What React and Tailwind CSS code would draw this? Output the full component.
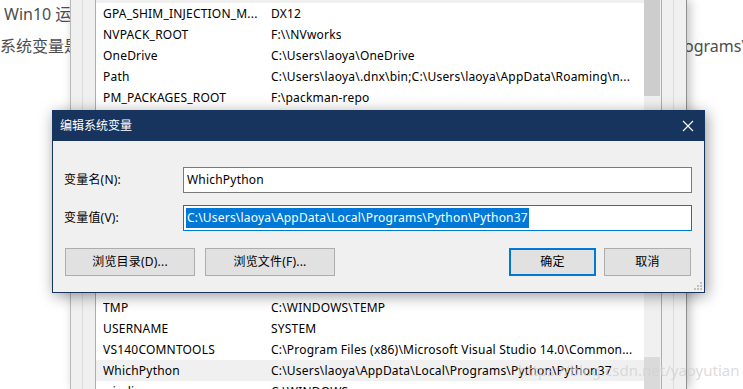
import React from "react";

// hidden rows sit under the dialog, so they are left blank
const rows = [
  { name: "", value: "", hl: true },
  { name: "GPA_SHIM_INJECTION_M...", value: "DX12" },
  { name: "NVPACK_ROOT", value: "F:\\\\NVworks" },
  { name: "OneDrive", value: "C:\\Users\\laoya\\OneDrive" },
  { name: "Path", value: "C:\\Users\\laoya\\.dnx\\bin;C:\\Users\\laoya\\AppData\\Roaming\\n..." },
  { name: "PM_PACKAGES_ROOT", value: "F:\\packman-repo" },
  { name: "", value: "" },
  { name: "", value: "" },
  { name: "", value: "" },
  { name: "", value: "" },
  { name: "", value: "" },
  { name: "", value: "" },
  { name: "", value: "" },
  { name: "", value: "" },
  { name: "", value: "" },
  { name: "TMP", value: "C:\\WINDOWS\\TEMP" },
  { name: "USERNAME", value: "SYSTEM" },
  { name: "VS140COMNTOOLS", value: "C:\\Program Files (x86)\\Microsoft Visual Studio 14.0\\Common..." },
  { name: "WhichPython", value: "C:\\Users\\laoya\\AppData\\Local\\Programs\\Python\\Python37", hl: true },
  { name: "windir", value: "C:\\WINDOWS" },
];

function EnvRow({ name, value, hl }) {
  return (
    <div className={`flex h-[21px] shrink-0 items-center pl-[7px] whitespace-nowrap ${hl ? "bg-[#f0f0f0]" : ""}`}>
      <span className="w-[168px] shrink-0 overflow-hidden">{name}</span>
      <span className="overflow-hidden">{value}</span>
    </div>
  );
}

function Btn({ children, primary, w }) {
  return (
    <div
      className={`flex h-[28px] items-center justify-center bg-[#e1e1e1] ${w} ${
        primary ? "border-2 border-[#0078d7]" : "border border-[#adadad]"
      }`}
    >
      {children}
    </div>
  );
}

export default function App() {
  return (
    <div className="relative h-[389px] w-[743px] overflow-hidden bg-white text-[12px] tracking-[0.2px] text-black font-['Noto_Sans','Noto_Sans_CJK_SC',sans-serif]">
      {/* blog page behind the windows */}
      <div className="text-[16px] leading-[20px] tracking-normal text-[#4d4d4d]">
        <div className="pl-[4px] pt-[4px]">Win10 运行 Python</div>
        <div className="mt-[12px] flex whitespace-nowrap">
          <span className="w-[684px] shrink-0">系统变量是什么</span>
          <span>ograms\Python</span>
        </div>
      </div>

      {/* environment variables window */}
      <div className="absolute left-[70px] top-0 flex h-[389px] w-[617px] border-x border-l-[#b9b9b9] border-r-[#8f8f8f] bg-[#f0f0f0] pl-[11px] pr-[12px] shadow-[3px_0_10px_rgba(0,0,0,0.25)]">
        <div className="flex flex-1 border-x border-[#dcdcdc] pl-[12px] pr-[11px]">
          <div className="flex flex-1 border-x border-[#adadad] bg-white">
            <div className="-mt-[18px] flex flex-1 flex-col overflow-hidden">
              {rows.map((r, i) => (
                <EnvRow key={i} {...r} />
              ))}
            </div>
            <div className="flex w-[17px] flex-col bg-[#f0f0f0]">
              <div className="mr-[1px] h-[96px] bg-[#cdcdcd]" />
              <div className="flex-1" />
              <div className="mr-[1px] h-[32px] bg-[#dadada]" />
            </div>
          </div>
        </div>
      </div>

      {/* edit dialog */}
      <div className="absolute left-[52px] top-[110px] flex h-[183px] w-[653px] flex-col border border-[#17345f] bg-[#f0f0f0] shadow-[2px_3px_14px_rgba(0,0,0,0.4)]">
        <div className="flex h-[30px] shrink-0 items-center justify-between bg-[#17345f] pl-[7px] pr-[9px] tracking-normal text-white">
          <span>编辑系统变量</span>
          <svg width="12" height="12" viewBox="0 0 12 12" className="mr-[1px]">
            <path d="M1 1L11 11M11 1L1 11" stroke="white" strokeWidth="1.1" />
          </svg>
        </div>
        <div className="flex flex-1 flex-col pl-[11px] pr-[12px] pt-[26px]">
          <div className="flex items-center">
            <span className="w-[119px] shrink-0">变量名(N):</span>
            <div className="flex h-[26px] flex-1 items-center border border-[#7a7a7a] bg-white pl-[3px]">
              WhichPython
            </div>
          </div>
          <div className="mt-[12px] flex items-center">
            <span className="w-[119px] shrink-0">变量值(V):</span>
            <div className="flex h-[26px] flex-1 items-center border border-[#0078d7] bg-white pl-[2px]">
              <span className="bg-[#0078d7] px-[1px] leading-[20px] text-white">
                C:\Users\laoya\AppData\Local\Programs\Python\Python37
              </span>
            </div>
          </div>
          <div className="mt-[17px] flex items-center pl-[1px] pr-[1px]">
            <div className="flex gap-[10px]">
              <Btn w="w-[130px]">浏览目录(D)...</Btn>
              <Btn w="w-[130px]">浏览文件(F)...</Btn>
            </div>
            <div className="ml-auto flex gap-[8px]">
              <Btn primary w="w-[87px]">确定</Btn>
              <Btn w="w-[87px]">取消</Btn>
            </div>
          </div>
        </div>
        <svg width="8" height="8" viewBox="0 0 8 8" className="absolute bottom-[2px] right-[2px]">
          <rect x="6" y="0" width="2" height="2" fill="#c0c0c0" />
          <rect x="3" y="3" width="2" height="2" fill="#c0c0c0" />
          <rect x="6" y="3" width="2" height="2" fill="#c0c0c0" />
          <rect x="0" y="6" width="2" height="2" fill="#c0c0c0" />
          <rect x="3" y="6" width="2" height="2" fill="#c0c0c0" />
          <rect x="6" y="6" width="2" height="2" fill="#c0c0c0" />
        </svg>
      </div>

      {/* watermark */}
      <div className="absolute left-[518px] top-[360px] whitespace-nowrap text-[15px] leading-[20px] tracking-normal text-[#d2d2d2]/80">
        https://blog.csdn.net/yaoyutian
      </div>
    </div>
  );
}
